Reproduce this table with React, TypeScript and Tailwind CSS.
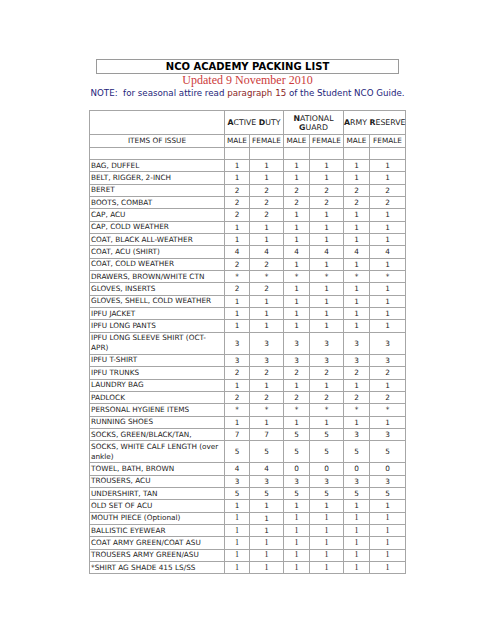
type Row = { item: string[]; vals: string[]; serif?: boolean; sansCol?: number };

const ones = ["1", "1", "1", "1", "1", "1"];
const all = (v: string) => [v, v, v, v, v, v];

const rows: Row[] = [
  { item: ["BAG, DUFFEL"], vals: ones },
  { item: ["BELT, RIGGER, 2-INCH"], vals: ones },
  { item: ["BERET"], vals: all("2") },
  { item: ["BOOTS, COMBAT"], vals: all("2") },
  { item: ["CAP, ACU"], vals: ["2", "2", "1", "1", "1", "1"] },
  { item: ["CAP, COLD WEATHER"], vals: ones },
  { item: ["COAT, BLACK ALL-WEATHER"], vals: ones },
  { item: ["COAT, ACU (SHIRT)"], vals: all("4") },
  { item: ["COAT, COLD WEATHER"], vals: ["2", "2", "1", "1", "1", "1"] },
  { item: ["DRAWERS, BROWN/WHITE CTN"], vals: all("*") },
  { item: ["GLOVES, INSERTS"], vals: ["2", "2", "1", "1", "1", "1"] },
  { item: ["GLOVES, SHELL, COLD WEATHER"], vals: ones },
  { item: ["IPFU JACKET"], vals: ones },
  { item: ["IPFU LONG PANTS"], vals: ones },
  { item: ["IPFU LONG SLEEVE SHIRT (OCT-", "APR)"], vals: all("3") },
  { item: ["IPFU T-SHIRT"], vals: all("3") },
  { item: ["IPFU TRUNKS"], vals: all("2") },
  { item: ["LAUNDRY BAG"], vals: ones },
  { item: ["PADLOCK"], vals: all("2") },
  { item: ["PERSONAL HYGIENE ITEMS"], vals: all("*") },
  { item: ["RUNNING SHOES"], vals: ones },
  { item: ["SOCKS, GREEN/BLACK/TAN,"], vals: ["7", "7", "5", "5", "3", "3"] },
  { item: ["SOCKS, WHITE CALF LENGTH (over", "ankle)"], vals: all("5") },
  { item: ["TOWEL, BATH, BROWN"], vals: ["4", "4", "0", "0", "0", "0"] },
  { item: ["TROUSERS, ACU"], vals: all("3") },
  { item: ["UNDERSHIRT, TAN"], vals: all("5") },
  { item: ["OLD SET OF ACU"], vals: ones },
  { item: ["MOUTH PIECE (Optional)"], vals: ones, serif: true, sansCol: 1 },
  { item: ["BALLISTIC EYEWEAR"], vals: ones, serif: true, sansCol: 1 },
  { item: ["COAT ARMY GREEN/COAT ASU"], vals: ones, serif: true },
  { item: ["TROUSERS ARMY GREEN/ASU"], vals: ones, serif: true },
  { item: ["*SHIRT AG SHADE 415 LS/SS"], vals: ones, serif: true },
];

const cell = "border border-[#a6a6a6] p-0";
const sans = { fontFamily: '"DejaVu Sans", Verdana, sans-serif' };
const serif = { fontFamily: '"Liberation Serif", "Times New Roman", serif', fontSize: "8px" };

function Group({ a, b, c, d }: { a: string; b: string; c: string; d: string }) {
  return (
    <span>
      <b className="font-bold">{a}</b>
      {b} <b className="font-bold">{c}</b>
      {d}
    </span>
  );
}

export default function App() {
  return (
    <div className="min-h-[640px] bg-white pt-[59px]">
      {/* Title */}
      <div className="mx-auto w-[303px] border border-[#9a9a9a] h-[15px] flex items-center justify-center">
        <h1 className="text-[10px] leading-none font-bold text-black" style={sans}>
          NCO ACADEMY PACKING LIST
        </h1>
      </div>
      <p
        className="text-center text-[12px] leading-[13px] text-[#cc3b3b]"
        style={{ fontFamily: '"Liberation Serif", "Times New Roman", serif' }}
      >
        Updated 9 November 2010
      </p>
      <p className="text-center text-[8.7px] leading-[13px] text-[#25257a]" style={sans}>
        NOTE:&nbsp; for seasonal attire read{" "}
        <span className="text-[#8c1f1f]">paragraph 15</span> of the Student NCO Guide.
      </p>

      {/* Packing table */}
      <table
        className="mx-auto mt-[10px] w-[316px] border-collapse text-[7.3px] text-[#1c1c1c] table-fixed"
        style={sans}
      >
        <colgroup>
          <col className="w-[135px]" />
          <col className="w-[25px]" />
          <col className="w-[34px]" />
          <col className="w-[26px]" />
          <col className="w-[34px]" />
          <col className="w-[26px]" />
          <col className="w-[36px]" />
        </colgroup>
        <thead>
          <tr className="h-[24px] text-[7.8px]">
            <th className={cell}></th>
            <th colSpan={2} className={`${cell} font-normal text-center leading-[9px] whitespace-nowrap`}>
              <Group a="A" b="CTIVE" c="D" d="UTY" />
            </th>
            <th colSpan={2} className={`${cell} font-normal text-center leading-[9px]`}>
              <b className="font-bold">N</b>ATIONAL
              <br />
              <b className="font-bold">G</b>UARD
            </th>
            <th colSpan={2} className={`${cell} font-normal text-center leading-[9px] whitespace-nowrap`}>
              <Group a="A" b="RMY" c="R" d="ESERVE" />
            </th>
          </tr>
          <tr className="h-[13px]">
            <th className={`${cell} font-normal text-center`}>ITEMS OF ISSUE</th>
            {["MALE", "FEMALE", "MALE", "FEMALE", "MALE", "FEMALE"].map((h, i) => (
              <th key={i} className={`${cell} font-normal text-center`}>
                {h}
              </th>
            ))}
          </tr>
          <tr className="h-[12px]">
            {[0, 1, 2, 3, 4, 5, 6].map((i) => (
              <td key={i} className={cell}></td>
            ))}
          </tr>
        </thead>
        <tbody>
          {rows.map((r) => (
            <tr key={r.item.join(" ")} className={r.item.length > 1 ? "h-[22px]" : "h-[12.35px]"}>
              <td className={`${cell} pl-[1px] whitespace-nowrap leading-[10px]`}>
                {r.item[0]}
                {r.item[1] && (
                  <>
                    <br />
                    {r.item[1]}
                  </>
                )}
              </td>
              {r.vals.map((v, i) => (
                <td
                  key={i}
                  className={`${cell} text-center leading-none`}
                  style={r.serif && r.sansCol !== i ? serif : undefined}
                >
                  {v}
                </td>
              ))}
            </tr>
          ))}
        </tbody>
      </table>
    </div>
  );
}
